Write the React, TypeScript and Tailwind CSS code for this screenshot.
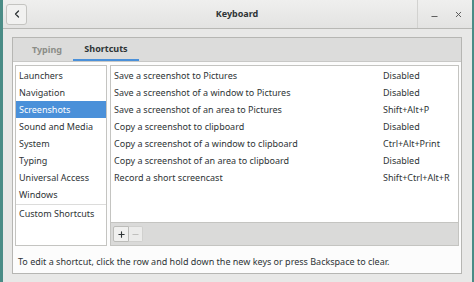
import { ChevronLeft, Minus, Plus, X } from 'lucide-react'

const sections = [
  'Launchers',
  'Navigation',
  'Screenshots',
  'Sound and Media',
  'System',
  'Typing',
  'Universal Access',
  'Windows',
]

const shortcuts = [
  { name: 'Save a screenshot to Pictures', accel: 'Disabled' },
  { name: 'Save a screenshot of a window to Pictures', accel: 'Disabled' },
  { name: 'Save a screenshot of an area to Pictures', accel: 'Shift+Alt+P' },
  { name: 'Copy a screenshot to clipboard', accel: 'Disabled' },
  { name: 'Copy a screenshot of a window to clipboard', accel: 'Ctrl+Alt+Print' },
  { name: 'Copy a screenshot of an area to clipboard', accel: 'Disabled' },
  { name: 'Record a short screencast', accel: 'Shift+Ctrl+Alt+R' },
]

export default function App() {
  return (
    <div
      className="flex w-[474px] h-[282px] bg-[#4a8c86] text-[#2e3436] text-[9px]"
      style={{ fontFamily: '"Noto Sans", "DejaVu Sans", sans-serif' }}
    >
      <div className="w-[3px]" />
      <div className="flex-1 flex flex-col bg-[#e8e8e7]">
        {/* Header bar */}
        <div className="h-[29px] flex items-center border-b border-[#b8b8b5] bg-gradient-to-b from-[#efefee] to-[#e3e3e2]">
          <div className="ml-[3px] w-[21px] h-[21px] flex items-center justify-center rounded-[3px] border border-[#c4c4c1] bg-[#f1f1f0]">
            <ChevronLeft size={12} strokeWidth={2.5} className="text-[#2e3436]" />
          </div>
          <div className="flex-1 text-center font-bold text-[9px] pl-[30px]">Keyboard</div>
          <div className="h-full border-l border-[#d2d2d0] w-[1px]" />
          <div className="w-[54px] flex items-center justify-around pl-[4px] pr-[1px]">
            <Minus size={9} strokeWidth={2.5} className="mt-[4px] text-[#555]" />
            <X size={9} strokeWidth={2.5} className="text-[#555]" />
          </div>
        </div>

        {/* Notebook */}
        <div className="flex-1 ml-[9px] mr-[10px] mt-[8px] mb-[8px] border border-[#b6b6b3] flex flex-col bg-[#fcfcfc]">
          <div className="h-[24px] flex items-end pl-[8px] bg-[#dcdcdb] border-b border-[#c8c8c6]">
            <div className="w-[52px] h-full flex items-center justify-center font-bold text-[#8b8d88]">Typing</div>
            <div className="w-[66px] h-full flex items-center justify-center font-bold border-b-2 border-[#4a90d9]">
              Shortcuts
            </div>
          </div>

          <div className="flex-1 flex flex-col pl-[2px] pr-[2px] pt-[3px]">
            <div className="flex gap-[3px] h-[181px]">
              {/* Sections list */}
              <div className="w-[92px] border border-[#c4c4c1] bg-white pt-[1px] flex flex-col">
                {sections.map((s) => (
                  <div
                    key={s}
                    className={
                      s === 'Screenshots'
                        ? 'h-[17px] flex items-center pl-[3px] bg-[#4a90d9] text-white'
                        : 'h-[17px] flex items-center pl-[3px]'
                    }
                  >
                    {s}
                  </div>
                ))}
                <div className="h-[2px] border-b border-[#dcdcdb]" />
                <div className="h-[17px] flex items-center pl-[3px]">Custom Shortcuts</div>
              </div>

              {/* Shortcuts list */}
              <div className="flex-1 flex flex-col">
                <div className="flex-1 border border-[#c4c4c1] bg-white pt-[1px]">
                  {shortcuts.map((sc) => (
                    <div key={sc.name} className="h-[17px] flex items-center pl-[3px]">
                      <div className="w-[269px]">{sc.name}</div>
                      <div>{sc.accel}</div>
                    </div>
                  ))}
                </div>
                <div className="h-[23px] border border-t-0 border-[#c4c4c1] bg-[#dadad9] flex items-center pl-[2px]">
                  <div className="w-[16px] h-[16px] flex items-center justify-center border border-[#bcbcb9] rounded-l-[2px] bg-[#f0f0ef]">
                    <Plus size={9} strokeWidth={3} className="text-[#2e3436]" />
                  </div>
                  <div className="w-[14px] h-[16px] flex items-center justify-center border border-l-0 border-[#d0d0ce] rounded-r-[2px] bg-[#ebebea]">
                    <Minus size={9} strokeWidth={2} className="text-[#b0b0ad]" />
                  </div>
                </div>
              </div>
            </div>

            <div className="mt-[8px] pl-[3px] h-[16px] flex items-center">
              To edit a shortcut, click the row and hold down the new keys or press Backspace to clear.
            </div>
          </div>
        </div>
      </div>
      <div className="w-[2px]" />
    </div>
  )
}
